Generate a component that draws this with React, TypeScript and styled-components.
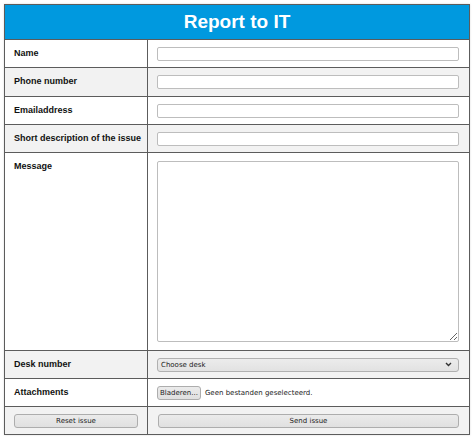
import { createGlobalStyle } from 'styled-components'
import styled from 'styled-components'

const GlobalStyle = createGlobalStyle`
  html, body {
    margin: 0;
    padding: 0;
    background: #ffffff;
  }
  body {
    padding: 4px;
    font-family: "Liberation Sans", Arial, sans-serif;
  }
`

const Table = styled.div`
  width: 466px;
  box-sizing: border-box;
  border: 1px solid #5c5c5c;
  box-shadow: 0 0 2px rgba(0, 0, 0, 0.15);
`

const Header = styled.div`
  height: 34px;
  background: #0099df;
  color: #ffffff;
  display: flex;
  align-items: center;
  justify-content: center;
  font-family: "Liberation Sans", Arial, sans-serif;
  font-weight: bold;
  font-size: 19px;
`

const Row = styled.div<{ $h: number; $shade?: boolean }>`
  display: grid;
  grid-template-columns: 143px 1fr;
  height: ${({ $h }) => $h}px;
  border-top: 1px solid #5c5c5c;
  background: ${({ $shade }) => ($shade ? '#f2f2f2' : '#ffffff')};
`

const Label = styled.div`
  border-right: 1px solid #5c5c5c;
  padding: 8px 0 0 9px;
  font-family: "Liberation Sans", Arial, sans-serif;
  font-weight: bold;
  font-size: 9px;
  color: #111111;
  white-space: nowrap;
`

const Field = styled.div<{ $top?: boolean }>`
  display: flex;
  align-items: ${({ $top }) => ($top ? 'flex-start' : 'center')};
  padding: ${({ $top }) => ($top ? '8px 10px 0 9px' : '0 10px 0 9px')};
  gap: 4px;
  min-width: 0;
`

const ButtonCell = styled.div<{ $divider?: boolean }>`
  display: flex;
  align-items: center;
  padding: 0 ${({ $divider }) => ($divider ? '9px' : '10px')};
  border-right: ${({ $divider }) => ($divider ? '1px solid #5c5c5c' : 'none')};
`

const TextInput = styled.input`
  flex: 1;
  height: 14px;
  box-sizing: border-box;
  border: 1px solid #bdbdbd;
  border-radius: 2px;
  background: #ffffff;
  padding: 0 3px;
  outline: none;
`

const Message = styled.textarea`
  flex: 1;
  height: 181px;
  box-sizing: border-box;
  border: 1px solid #bdbdbd;
  border-radius: 2px;
  background: #ffffff;
  resize: vertical;
  outline: none;
`

const Select = styled.div`
  flex: 1;
  height: 14px;
  box-sizing: border-box;
  border: 1px solid #b0b0b0;
  border-radius: 3px;
  background: linear-gradient(#ececec, #e2e2e2);
  display: flex;
  align-items: center;
  justify-content: space-between;
  padding: 0 6px 0 3px;
  font-family: "DejaVu Sans", Tahoma, sans-serif;
  font-size: 7px;
  color: #222222;
`

const SmallButton = styled.button<{ $wide?: boolean }>`
  ${({ $wide }) => ($wide ? 'flex: 1;' : '')}
  height: 14px;
  box-sizing: border-box;
  border: 1px solid #adadad;
  border-radius: 3px;
  background: linear-gradient(#ebebeb, #e0e0e0);
  padding: 0 2px;
  font-family: "DejaVu Sans", Tahoma, sans-serif;
  font-size: 7px;
  color: #222222;
  line-height: 12px;
`

const FileNote = styled.span`
  font-family: "DejaVu Sans", Tahoma, sans-serif;
  font-size: 7px;
  color: #222222;
`

const Chevron = () => (
  <svg width="7" height="5" viewBox="0 0 7 5">
    <path d="M1 1 L3.5 3.5 L6 1" fill="none" stroke="#333" strokeWidth="1.4" />
  </svg>
)

const textRows = [
  { label: 'Name', h: 27 },
  { label: 'Phone number', h: 28 },
  { label: 'Emailaddress', h: 27 },
  { label: 'Short description of the issue', h: 27 },
]

const App = () => {
  return (
    <>
      <GlobalStyle />
      <Table>
        <Header>Report to IT</Header>
        {textRows.map((r, i) => (
          <Row key={r.label} $h={r.h} $shade={i % 2 === 1}>
            <Label>{r.label}</Label>
            <Field>
              <TextInput type="text" />
            </Field>
          </Row>
        ))}
        <Row $h={197}>
          <Label>Message</Label>
          <Field $top>
            <Message />
          </Field>
        </Row>
        <Row $h={27} $shade>
          <Label>Desk number</Label>
          <Field>
            <Select>
              <span>Choose desk</span>
              <Chevron />
            </Select>
          </Field>
        </Row>
        <Row $h={27}>
          <Label>Attachments</Label>
          <Field>
            <SmallButton>Bladeren...</SmallButton>
            <FileNote>Geen bestanden geselecteerd.</FileNote>
          </Field>
        </Row>
        <Row $h={27} $shade>
          <ButtonCell $divider>
            <SmallButton $wide>Reset issue</SmallButton>
          </ButtonCell>
          <ButtonCell>
            <SmallButton $wide>Send issue</SmallButton>
          </ButtonCell>
        </Row>
      </Table>
    </>
  )
}

export default App
